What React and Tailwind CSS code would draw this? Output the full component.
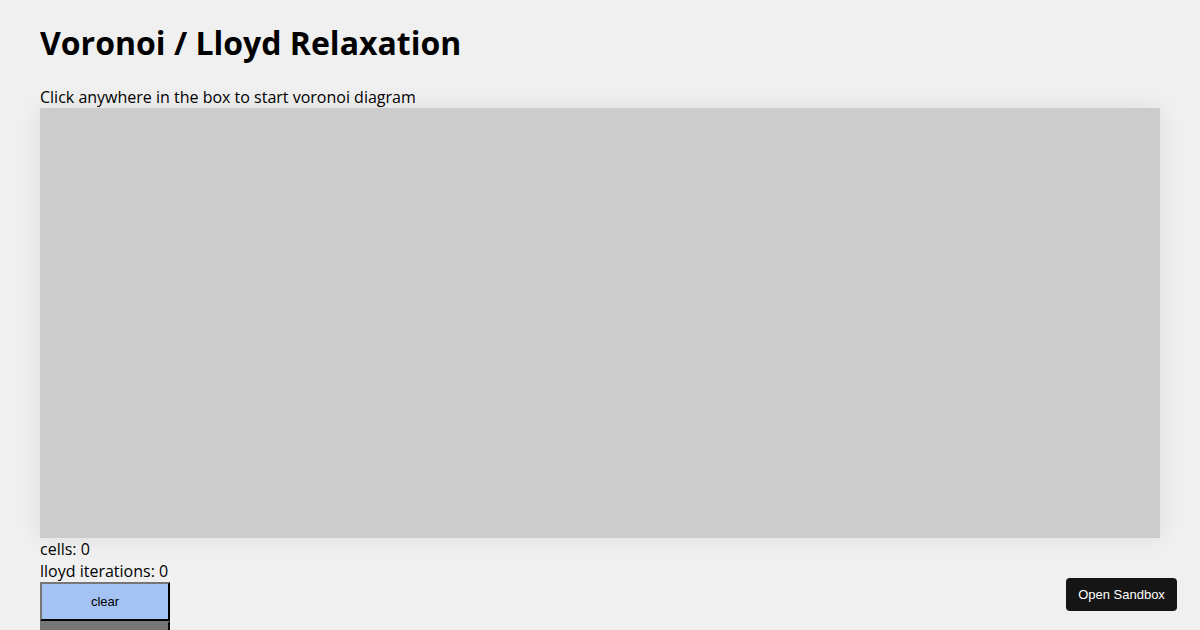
export default function App() {
  return (
    <div className="min-h-screen bg-[#f0f0f0] px-10 font-['Open_Sans',sans-serif] text-black">
      <h1 className="pt-[21px] text-[32px] font-bold leading-[44px]">Voronoi / Lloyd Relaxation</h1>
      <p className="mt-[21px] text-base leading-[22px]">Click anywhere in the box to start voronoi diagram</p>
      <div className="h-[430px] w-full bg-[#cccccc] shadow-[0_0_24px_rgba(0,0,0,0.08)]" />
      <div className="text-base leading-[22px]">cells: 0</div>
      <div className="text-base leading-[22px]">lloyd iterations: 0</div>
      <div className="flex flex-col">
        <button className="h-[39px] w-[130px] border-2 border-t-[#767676] border-l-[#767676] border-r-black border-b-black bg-[#a4c2f4] font-['Liberation_Sans',Arial,sans-serif] text-[13px]">
          clear
        </button>
        <button className="h-[39px] w-[130px] border-2 border-t-[#767676] border-l-[#767676] border-r-black border-b-black bg-[#767676]" />
      </div>
      <a className="fixed bottom-[19px] right-[23px] flex h-[33px] w-[111px] items-center justify-center rounded-[4px] bg-[#151515] font-['Liberation_Sans',Arial,sans-serif] text-[13px] text-white">
        Open Sandbox
      </a>
    </div>
  );
}
